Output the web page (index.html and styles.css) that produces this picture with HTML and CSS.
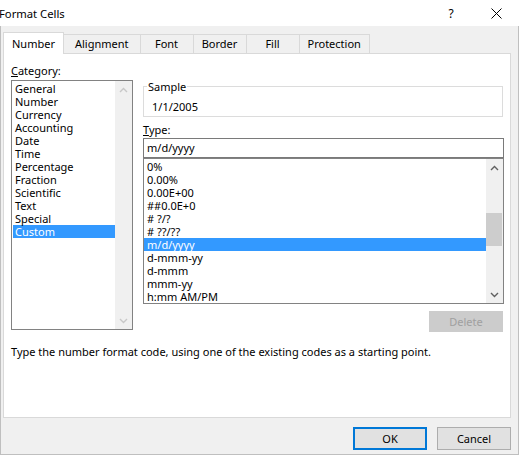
FILE: index.html
```html
<!DOCTYPE html>
<html>
<head>
<meta charset="utf-8">
<title>Format Cells</title>
<link rel="stylesheet" href="styles.css">
</head>
<body>
<div class="titlebar">
  <span class="title">Format Cells</span>
  <span class="tb-btn tb-help">?</span>
  <span class="tb-btn tb-close"><svg width="11" height="11" viewBox="0 0 11 11"><path d="M0.5 0.5 L10.5 10.5 M10.5 0.5 L0.5 10.5" stroke="#000" stroke-width="1" fill="none"/></svg></span>
</div>
<div class="main">
  <div class="tabs">
    <div class="tab active">Number</div>
    <div class="tab tab-wide">Alignment</div>
    <div class="tab">Font</div>
    <div class="tab">Border</div>
    <div class="tab">Fill</div>
    <div class="tab">Protection</div>
  </div>
  <div class="page">
    <div class="cols">
      <div class="col-left">
        <div class="label"><u>C</u>ategory:</div>
        <div class="listbox cat">
          <div class="items">
            <div class="item">General</div>
            <div class="item">Number</div>
            <div class="item">Currency</div>
            <div class="item">Accounting</div>
            <div class="item">Date</div>
            <div class="item">Time</div>
            <div class="item">Percentage</div>
            <div class="item">Fraction</div>
            <div class="item">Scientific</div>
            <div class="item">Text</div>
            <div class="item">Special</div>
            <div class="item selected">Custom</div>
          </div>
          <div class="vscroll disabled">
            <div class="arrow"><svg width="9" height="6" viewBox="0 0 9 6"><path d="M1 5 L4.5 1.5 L8 5" stroke="currentColor" stroke-width="1.4" fill="none"/></svg></div>
            <div class="track"></div>
            <div class="arrow"><svg width="9" height="6" viewBox="0 0 9 6"><path d="M1 1 L4.5 4.5 L8 1" stroke="currentColor" stroke-width="1.4" fill="none"/></svg></div>
          </div>
        </div>
      </div>
      <div class="col-right">
        <fieldset class="sample">
          <legend>Sample</legend>
          <div class="sample-val">1/1/2005</div>
        </fieldset>
        <div class="label type-label"><u>T</u>ype:</div>
        <div class="textbox">m/d/yyyy</div>
        <div class="listbox types">
          <div class="items">
            <div class="item">0%</div>
            <div class="item">0.00%</div>
            <div class="item">0.00E+00</div>
            <div class="item">##0.0E+0</div>
            <div class="item"># ?/?</div>
            <div class="item"># ??/??</div>
            <div class="item selected">m/d/yyyy</div>
            <div class="item">d-mmm-yy</div>
            <div class="item">d-mmm</div>
            <div class="item">mmm-yy</div>
            <div class="item">h:mm AM/PM</div>
          </div>
          <div class="vscroll">
            <div class="arrow"><svg width="9" height="6" viewBox="0 0 9 6"><path d="M1 5 L4.5 1.5 L8 5" stroke="currentColor" stroke-width="1.4" fill="none"/></svg></div>
            <div class="track"><div class="thumb"></div></div>
            <div class="arrow"><svg width="9" height="6" viewBox="0 0 9 6"><path d="M1 1 L4.5 4.5 L8 1" stroke="currentColor" stroke-width="1.4" fill="none"/></svg></div>
          </div>
        </div>
        <div class="actions"><button class="btn btn-disabled">Delete</button></div>
      </div>
    </div>
    <p class="desc">Type the number format code, using one of the existing codes as a starting point.</p>
  </div>
  <div class="footer">
    <button class="btn btn-default">OK</button>
    <button class="btn">Cancel</button>
  </div>
</div>
</body>
</html>
```

FILE: styles.css
```css
* { box-sizing: border-box; }
html, body { margin: 0; padding: 0; }
body {
  width: 519px;
  height: 456px;
  overflow: hidden;
  background: #fff;
  font-family: "Noto Sans", "Open Sans", sans-serif;
  font-size: 11px;
  line-height: 15px;
  color: #000;
}
u { text-decoration: underline; text-underline-offset: 1px; }

.titlebar {
  height: 26px;
  display: flex;
  align-items: center;
  background: #fff;
}
.title { flex: 1; margin-left: -1px; font-size: 11.25px; }
.tb-btn { height: 26px; display: flex; align-items: center; justify-content: center; }
.tb-help { width: 46px; font-size: 12px; }
.tb-close { width: 45px; }

.main {
  height: 429px;
  background: #f0f0f0;
  border: 1px solid #bfbfbf;
  border-top: none;
  padding: 6px 7px 0 2px;
  display: flex;
  flex-direction: column;
}

.tabs {
  display: flex;
  align-items: flex-start;
  height: 21px;
  position: relative;
  z-index: 1;
}
.tab {
  min-width: 54px;
  height: 19px;
  margin-top: 2px;
  margin-right: -1px;
  padding: 1px 8px 0;
  border: 1px solid #d9d9d9;
  border-bottom: none;
  background: #f0f0f0;
  text-align: center;
  white-space: nowrap;
}
.tab-wide { padding-left: 11px; padding-right: 11px; }
.tab.active {
  height: 22px;
  margin-top: 0;
  padding-top: 3px;
  background: #fff;
}

.page {
  height: 365px;
  background: #fff;
  border: 1px solid #d9d9d9;
  padding: 9px 6px 0 7px;
}
.cols { display: flex; gap: 10px; }
.col-left { width: 122px; }
.col-right { width: 361px; padding-top: 16px; }

.label { height: 15px; white-space: nowrap; }

.listbox {
  display: flex;
  border: 1px solid #828282;
  background: #fff;
}
.cat { height: 250px; margin-top: 2px; }
.cat .items { width: 103px; padding: 1px 0 0 1px; }
.cat .item { padding-left: 2px; }
.item { height: 13px; line-height: 13px; white-space: nowrap; }
.item.selected { background: #3399ff; color: #fff; }

.vscroll {
  width: 17px;
  display: flex;
  flex-direction: column;
  background: #f0f0f0;
  color: #606060;
}
.vscroll.disabled { color: #c8c8c8; }
.arrow { height: 17px; display: flex; align-items: center; justify-content: center; }
.track { flex: 1; padding: 37px 1px 0 0; }
.thumb { height: 33px; background: #cdcdcd; }

.sample {
  width: 360px;
  margin: 0;
  padding: 0 0 0 3px;
  border: 1px solid #dcdcdc;
  min-width: 0;
}
.sample legend { padding: 0 1px; line-height: 15px; }
.sample-val { height: 15px; margin: 5px 0 2px; padding-left: 5px; }

.type-label { margin-top: 5px; }
.textbox {
  height: 20px;
  margin-top: 1px;
  border: 1px solid #7a7a7a;
  padding-left: 3px;
  line-height: 18px;
}
.types { height: 146px; }
.types .items { width: 342px; padding-top: 1px; }
.types .item { padding-left: 3px; }

.actions { display: flex; justify-content: flex-end; margin-top: 7px; padding-right: 1px; }

.btn {
  font: inherit;
  width: 74px;
  height: 23px;
  padding: 0;
  border: 1px solid #adadad;
  background: #e1e1e1;
  color: #000;
  line-height: 19px;
}
.btn-disabled {
  height: 21px;
  border-color: #cccccc;
  background: #cccccc;
  color: #a0a0a0;
}
.btn-default { border: 2px solid #0078d7; }

.desc { margin: 12px 0 0; white-space: nowrap; }

.footer {
  display: flex;
  justify-content: flex-end;
  gap: 10px;
  padding-top: 9px;
}
```
